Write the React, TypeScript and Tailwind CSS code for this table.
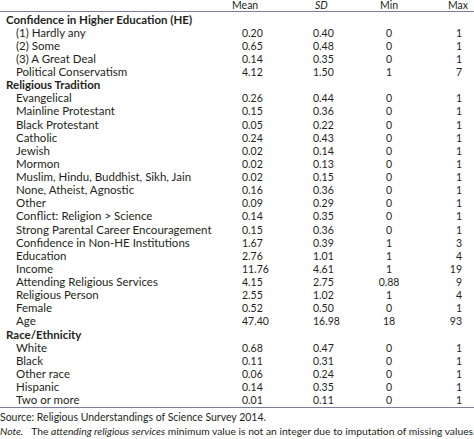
type Row = {
  label: string;
  head?: boolean;
  mean?: string;
  sd?: string;
  min?: string;
  max?: string;
};

const rows: Row[] = [
  { label: "Confidence in Higher Education (HE)", head: true },
  { label: "(1) Hardly any", mean: "0.20", sd: "0.40", min: "0", max: "1" },
  { label: "(2) Some", mean: "0.65", sd: "0.48", min: "0", max: "1" },
  { label: "(3) A Great Deal", mean: "0.14", sd: "0.35", min: "0", max: "1" },
  { label: "Political Conservatism", mean: "4.12", sd: "1.50", min: "1", max: "7" },
  { label: "Religious Tradition", head: true },
  { label: "Evangelical", mean: "0.26", sd: "0.44", min: "0", max: "1" },
  { label: "Mainline Protestant", mean: "0.15", sd: "0.36", min: "0", max: "1" },
  { label: "Black Protestant", mean: "0.05", sd: "0.22", min: "0", max: "1" },
  { label: "Catholic", mean: "0.24", sd: "0.43", min: "0", max: "1" },
  { label: "Jewish", mean: "0.02", sd: "0.14", min: "0", max: "1" },
  { label: "Mormon", mean: "0.02", sd: "0.13", min: "0", max: "1" },
  { label: "Muslim, Hindu, Buddhist, Sikh, Jain", mean: "0.02", sd: "0.15", min: "0", max: "1" },
  { label: "None, Atheist, Agnostic", mean: "0.16", sd: "0.36", min: "0", max: "1" },
  { label: "Other", mean: "0.09", sd: "0.29", min: "0", max: "1" },
  { label: "Conflict: Religion > Science", mean: "0.14", sd: "0.35", min: "0", max: "1" },
  { label: "Strong Parental Career Encouragement", mean: "0.15", sd: "0.36", min: "0", max: "1" },
  { label: "Confidence in Non-HE Institutions", mean: "1.67", sd: "0.39", min: "1", max: "3" },
  { label: "Education", mean: "2.76", sd: "1.01", min: "1", max: "4" },
  { label: "Income", mean: "11.76", sd: "4.61", min: "1", max: "19" },
  { label: "Attending Religious Services", mean: "4.15", sd: "2.75", min: "0.88", max: "9" },
  { label: "Religious Person", mean: "2.55", sd: "1.02", min: "1", max: "4" },
  { label: "Female", mean: "0.52", sd: "0.50", min: "0", max: "1" },
  { label: "Age", mean: "47.40", sd: "16.98", min: "18", max: "93" },
  { label: "Race/Ethnicity", head: true },
  { label: "White", mean: "0.68", sd: "0.47", min: "0", max: "1" },
  { label: "Black", mean: "0.11", sd: "0.31", min: "0", max: "1" },
  { label: "Other race", mean: "0.06", sd: "0.24", min: "0", max: "1" },
  { label: "Hispanic", mean: "0.14", sd: "0.35", min: "0", max: "1" },
  { label: "Two or more", mean: "0.01", sd: "0.11", min: "0", max: "1" },
];

const App = () => {
  return (
    <div
      className="w-[474px] h-[439px] bg-white text-[#231f20] text-[10.5px] overflow-hidden"
      style={{ fontFamily: "Lato, 'Liberation Sans', sans-serif" }}
    >
      {/* Header */}
      <div className="flex h-[12px] leading-[10px] border-b-[1.5px] border-[#7c7c9c]">
        <div className="w-[232px]" />
        <div className="w-[70px]">Mean</div>
        <div className="w-[70px] pl-[13px] italic">SD</div>
        <div className="w-[34px] text-center">Min</div>
        <div className="w-[62px] text-right">Max</div>
      </div>

      {/* Body */}
      <div className="pt-[0.5px] pb-[0.5px] border-b-[1.5px] border-[#7c7c9c]">
        {rows.map((r) => (
          <div
            key={r.label}
            className="flex items-baseline h-[13.14px] leading-[13.14px] whitespace-nowrap"
          >
            <div
              className={
                r.head
                  ? "w-[232px] pl-[6px] font-bold text-[11.5px]"
                  : "w-[232px] pl-[16px] text-[11.5px]"
              }
            >
              {r.label}
            </div>
            <div className="w-[70px] pl-[10px]">{r.mean}</div>
            <div className="w-[70px] pl-[11px]">{r.sd}</div>
            <div className="w-[34px] text-center">{r.min}</div>
            <div className="w-[62px] pr-[6px] text-right">{r.max}</div>
          </div>
        ))}
      </div>

      {/* Footer */}
      <div className="pt-[2px] leading-[14px] whitespace-nowrap">
        <div>Source: Religious Understandings of Science Survey 2014.</div>
        <div className="text-[10.3px]">
          <span className="italic">Note.</span>
          <span className="ml-[8px]">The </span>
          <span className="italic">attending religious services</span>
          <span> minimum value is not an integer due to imputation of missing values.</span>
        </div>
      </div>
    </div>
  );
};

export default App;
